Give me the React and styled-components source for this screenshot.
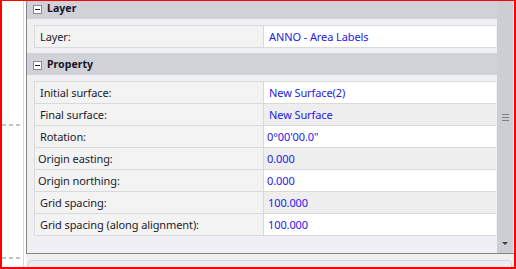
import React from 'react'
import styled, { createGlobalStyle } from 'styled-components'

const Global = createGlobalStyle`
  html, body {
    margin: 0;
    padding: 0;
    background: #ffffff;
  }
  * {
    box-sizing: border-box;
  }
`

const Frame = styled.div`
  width: 516px;
  height: 269px;
  display: flex;
  border: solid #ff0000;
  border-width: 1px 2px 2px 2px;
  background: #ffffff;
  overflow: hidden;
  font-family: 'Noto Sans', 'Open Sans', sans-serif;
`

const Gutter = styled.div`
  width: 22px;
  margin-right: 2px;
  border-right: 1px solid #d8d8d8;
  display: flex;
  flex-direction: column;
  flex-shrink: 0;
`

const Dash = styled.div`
  height: 2px;
  width: 21px;
  margin-top: ${(p) => p.$top}px;
  background: repeating-linear-gradient(90deg, #c4c4c4 0 4px, transparent 4px 7px);
`

const Main = styled.div`
  flex: 1;
  display: flex;
  flex-direction: column;
  min-width: 0;
`

const Panel = styled.div`
  height: 253px;
  display: flex;
  border-left: 1px solid #858585;
  border-bottom: 1px solid #858585;
  flex-shrink: 0;
`

const Sheet = styled.div`
  flex: 1;
  background: #f0f0f4;
  overflow: hidden;
  display: flex;
  flex-direction: column;
`

const Scroller = styled.div`
  margin-top: -4px;
  display: flex;
  flex-direction: column;
`

const Header = styled.div`
  height: 22px;
  background: #d1d2d7;
  display: flex;
  align-items: center;
  padding-left: 6px;
  gap: 5px;
  font-size: 10.6px;
  font-weight: 700;
  color: #16162a;
  flex-shrink: 0;
`

const Toggle = styled.span`
  width: 9px;
  height: 9px;
  margin-top: 3px;
  background: #ffffff;
  border: 1px solid #8c8c8c;
  display: flex;
  align-items: center;
  justify-content: center;
  &:after {
    content: '';
    width: 5px;
    height: 1px;
    background: #1c1c1c;
  }
`

const Group = styled.div`
  margin: 6px 1px ${(p) => p.$after}px 7px;
  border-top: 1px solid #dadada;
  border-left: 1px solid #dadada;
  display: flex;
  flex-direction: column;
`

const Row = styled.div`
  height: 22px;
  display: grid;
  grid-template-columns: 229px 1fr;
  border-bottom: 1px solid #dadada;
  font-size: 11px;
  letter-spacing: -0.1px;
`

const Label = styled.div`
  background: #f3f3f3;
  border-right: 1px solid #dadada;
  color: #1b1b2c;
  padding-left: ${(p) => p.$pad}px;
  display: flex;
  align-items: center;
  white-space: nowrap;
`

const Value = styled.div`
  background: ${(p) => (p.$alt ? '#eeeeee' : '#ffffff')};
  color: #2620e6;
  padding-left: ${(p) => p.$pad}px;
  display: flex;
  align-items: center;
  white-space: nowrap;
`

const Scrollbar = styled.div`
  width: 16px;
  background: #cdced3;
  display: flex;
  flex-direction: column;
  align-items: center;
  flex-shrink: 0;
`

const Grip = styled.div`
  margin-top: 113px;
  width: 7px;
  display: flex;
  flex-direction: column;
  gap: 2px;
  span {
    height: 1px;
    background: #7e7e84;
  }
`

const Arrow = styled.div`
  margin-top: auto;
  margin-bottom: 8px;
  width: 0;
  height: 0;
  border-left: 3px solid transparent;
  border-right: 3px solid transparent;
  border-top: 3px solid #3b3d4c;
`

const Edge = styled.div`
  width: 1px;
  background: #eeeef2;
  flex-shrink: 0;
`

const Footer = styled.div`
  flex: 1;
  background: #f0f0f0;
  padding: 6px 2px 0 2px;
`

const Tray = styled.div`
  height: 20px;
  background: #eceef1;
  border: 1px solid #d3d5da;
  border-radius: 4px;
`

const layerRows = [{ label: 'Layer:', value: 'ANNO - Area Labels', lp: 5, vp: 5 }]

const propertyRows = [
  { label: 'Initial surface:', value: 'New Surface(2)', lp: 5, vp: 5 },
  { label: 'Final surface:', value: 'New Surface', lp: 5, vp: 5, alt: true },
  { label: 'Rotation:', value: '0°00\'00.0"', lp: 5, vp: 3 },
  { label: 'Origin easting:', value: '0.000', lp: 3, vp: 3, alt: true },
  { label: 'Origin northing:', value: '0.000', lp: 3, vp: 3 },
  { label: 'Grid spacing:', value: '100.000', lp: 5, vp: 4, alt: true },
  { label: 'Grid spacing (along alignment):', value: '100.000', lp: 5, vp: 4 },
]

const Section = ({ title, rows, after }) => (
  <>
    <Header>
      <Toggle />
      {title}
    </Header>
    <Group $after={after}>
      {rows.map((r) => (
        <Row key={r.label}>
          <Label $pad={r.lp}>{r.label}</Label>
          <Value $pad={r.vp} $alt={r.alt}>
            {r.value}
          </Value>
        </Row>
      ))}
    </Group>
  </>
)

const App = () => {
  return (
    <>
      <Global />
      <Frame>
        <Gutter>
          <Dash $top={123} />
          <Dash $top={131} />
        </Gutter>
        <Main>
          <Panel>
            <Sheet>
              <Scroller>
                <Section title="Layer" rows={layerRows} after={5} />
                <Section title="Property" rows={propertyRows} after={0} />
              </Scroller>
            </Sheet>
            <Scrollbar>
              <Grip>
                <span />
                <span />
                <span />
              </Grip>
              <Arrow />
            </Scrollbar>
            <Edge />
          </Panel>
          <Footer>
            <Tray />
          </Footer>
        </Main>
      </Frame>
    </>
  )
}

export default App
